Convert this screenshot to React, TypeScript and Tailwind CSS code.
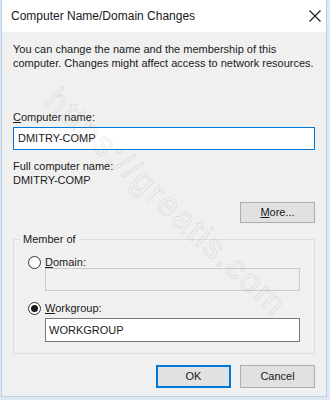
import React from "react";

const font = { fontFamily: '"Segoe UI", "Liberation Sans", Arial, sans-serif' };

function Radio({ checked }: { checked: boolean }) {
  return (
    <span className="w-[13px] h-[13px] rounded-full border border-[#333] bg-white flex items-center justify-center shrink-0">
      {checked && <span className="w-[7px] h-[7px] rounded-full bg-[#1a1a1a]" />}
    </span>
  );
}

export default function App() {
  return (
    <div className="w-[330px] h-[400px] bg-[#dde8f3] text-[11px] text-[#1a1a1a] overflow-hidden relative" style={font}>
      <div className="ml-[1px] mr-[3px] h-[397px] border border-t-0 border-[#b9cfe6] bg-[#f0f0f0] flex flex-col">
        {/* Title bar */}
        <div className="h-[32px] bg-white flex items-center justify-between pl-[9px] pr-[5px]">
          <span className="text-[12px] text-[#1a1a1a]">Computer Name/Domain Changes</span>
          <svg width="12" height="12" viewBox="0 0 12 12">
            <path d="M0.5 0.5 L11.5 11.5 M11.5 0.5 L0.5 11.5" stroke="#1a1a1a" strokeWidth="1.1" />
          </svg>
        </div>
        <div className="px-[11px] flex flex-col">
          <p className="mt-[10px] leading-[14px] whitespace-nowrap">
            You can change the name and the membership of this
            <br />
            computer. Changes might affect access to network resources.
          </p>
          <div className="mt-[40px] leading-[14px]">
            <span className="underline underline-offset-1">C</span>omputer name:
          </div>
          <div className="mt-[3px] h-[23px] border border-[#0078d7] bg-white flex items-center px-[4px]">
            DMITRY-COMP
          </div>
          <div className="mt-[9px] leading-[14px]">Full computer name:</div>
          <div className="leading-[14px]">DMITRY-COMP</div>
          <div className="mt-[15px] flex justify-end">
            <button className="w-[75px] h-[21px] border border-[#adadad] bg-[#e1e1e1] text-[11px] leading-none">
              <span className="underline underline-offset-1">M</span>ore...
            </button>
          </div>
          {/* Group box */}
          <div className="relative mt-[16px] h-[115px] border border-[#dcdcdc] rounded-[1px]">
            <span className="absolute -top-[8px] left-[6px] bg-[#f0f0f0] px-[3px] leading-[14px]">Member of</span>
            <div className="pl-[14px] pr-[14px] pt-[15px] flex flex-col">
              <div className="flex items-center gap-[4px] h-[14px]">
                <Radio checked={false} />
                <span>
                  <span className="underline underline-offset-1">D</span>omain:
                </span>
              </div>
              <div className="ml-[17px] -mt-[1px] h-[23px] border border-[#cccccc] bg-[#f0f0f0]" />
              <div className="mt-[10px] flex items-center gap-[4px] h-[14px]">
                <Radio checked={true} />
                <span>
                  <span className="underline underline-offset-1">W</span>orkgroup:
                </span>
              </div>
              <div className="ml-[17px] mt-[3px] h-[24px] border border-[#7a7a7a] bg-white flex items-center px-[3px]">
                WORKGROUP
              </div>
            </div>
          </div>
          <div className="mt-[11px] flex justify-end gap-[9px]">
            <button className="w-[75px] h-[23px] border-2 border-[#0078d7] bg-[#e1e1e1] text-[11px] leading-none">OK</button>
            <button className="w-[75px] h-[23px] border border-[#adadad] bg-[#e1e1e1] text-[11px] leading-none">Cancel</button>
          </div>
        </div>
      </div>
      {/* Watermark */}
      <div
        className="absolute left-[8px] top-[178px] w-[320px] text-[34px] text-transparent pointer-events-none select-none tracking-[2px]"
        style={{ transform: "rotate(43deg)", transformOrigin: "center", WebkitTextStroke: "0.6px rgba(150,150,150,0.3)" }}
      >
        https://greatis.com
      </div>
    </div>
  );
}
